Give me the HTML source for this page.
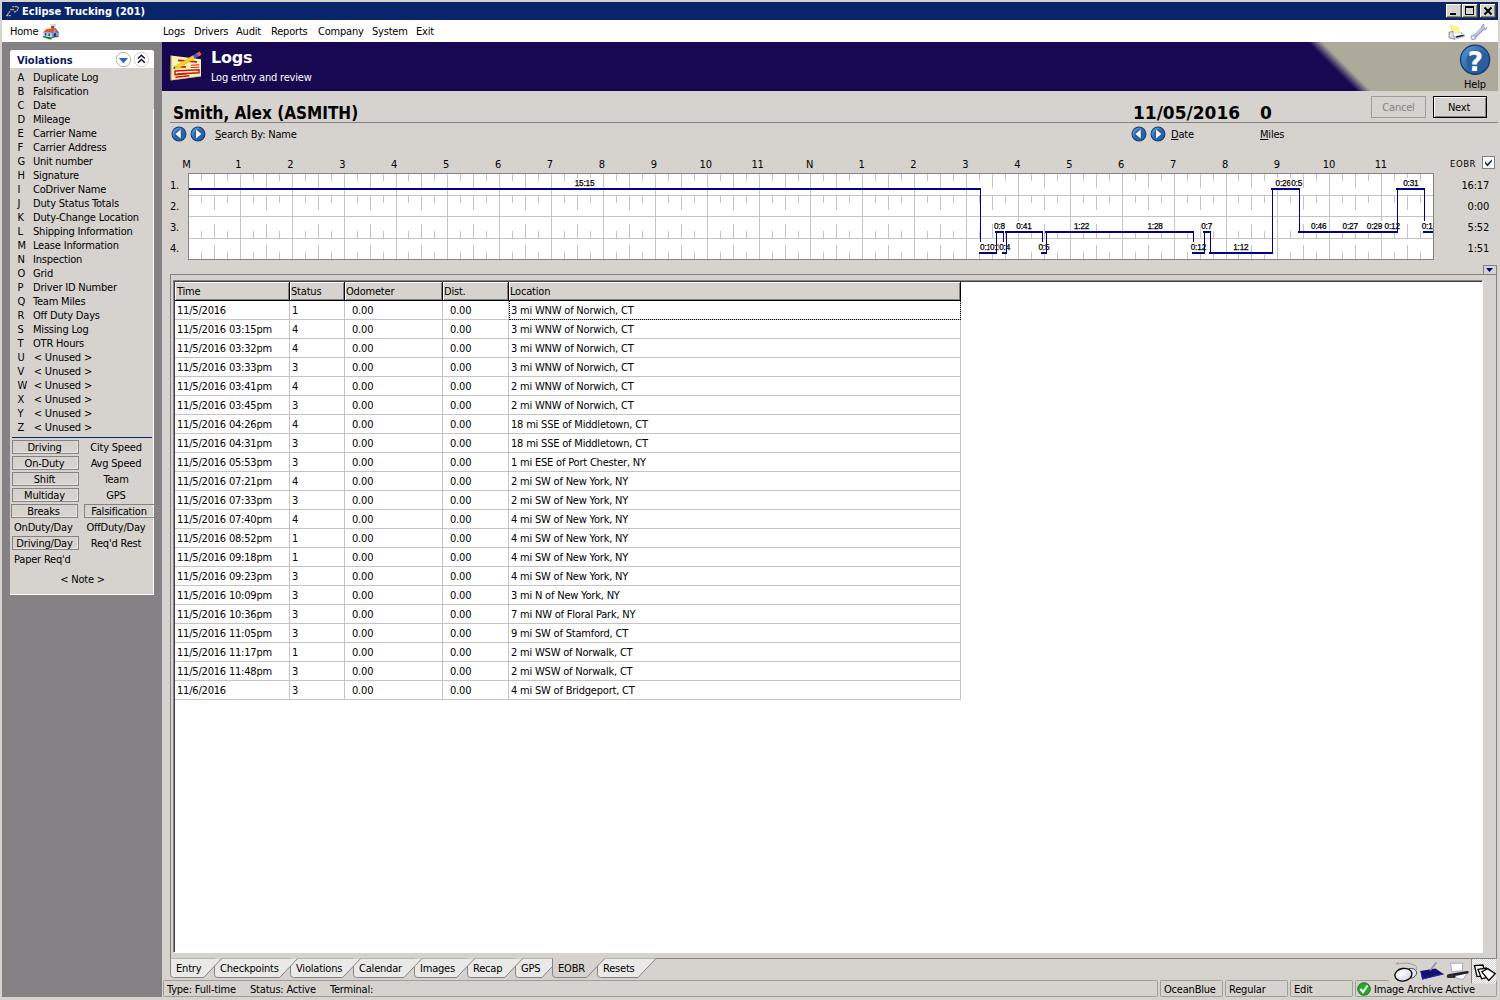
<!DOCTYPE html>
<html><head><meta charset="utf-8"><title>Eclipse Trucking (201)</title>
<style>
html,body{margin:0;padding:0}
body{width:1500px;height:1000px;overflow:hidden;background:#d6d3ce;position:relative;
 font-family:"DejaVu Sans Condensed","Liberation Sans",sans-serif;font-size:11px;line-height:13px;color:#000;letter-spacing:-0.2px}
div,span{position:absolute;box-sizing:border-box;white-space:nowrap}
.t{height:13px}
.b{font-weight:bold}
.c{text-align:center}
.r{text-align:right}
u{text-decoration:underline}

svg.ch text{font-family:"Liberation Sans",sans-serif;font-size:8.2px;letter-spacing:-0.15px;stroke:#000;stroke-width:0.25px}
</style></head>
<body>
<div class="" style="left:0px;top:0px;width:1500px;height:1000px;background:#d6d3ce"></div>
<div class="" style="left:2px;top:2px;width:1496px;height:18px;background:#08246b"></div>
<svg style="position:absolute;left:4px;top:4px" width="17" height="14" viewBox="4 4 17 14"><path d="M6 15.6 H10.8 M7.2 15 L10 11.4 M12.2 6.6 H17.6 L18.4 8 L17 10.8 L13.6 12.4" stroke="#b4b0ac" stroke-width="1.3" fill="none" stroke-dasharray="2.2 0.6"/><path d="M10 9.6 H14.2" stroke="#f0a020" stroke-width="1.3"/></svg>
<div class="t b" style="left:22px;top:5px;color:#fff;letter-spacing:0">Eclipse Trucking (201)</div>
<div class="" style="left:1446px;top:4px;width:16px;height:14px;background:#d6d3ce;box-shadow:inset -1px -1px 0 #424142, inset 1px 1px 0 #fff, inset -2px -2px 0 #848284"><div style="left:4px;top:9px;width:6px;height:2px;background:#000"></div></div>
<div class="" style="left:1462px;top:4px;width:16px;height:14px;background:#d6d3ce;box-shadow:inset -1px -1px 0 #424142, inset 1px 1px 0 #fff, inset -2px -2px 0 #848284"><div style="left:3px;top:2px;width:9px;height:9px;border:1px solid #000;border-top-width:2px"></div></div>
<div class="" style="left:1480px;top:4px;width:16px;height:14px;background:#d6d3ce;box-shadow:inset -1px -1px 0 #424142, inset 1px 1px 0 #fff, inset -2px -2px 0 #848284"><svg style="position:absolute;left:0;top:0" width="16" height="14"><path d="M4.5 3.5 L11.5 10.5 M11.5 3.5 L4.5 10.5" stroke="#000" stroke-width="2"/></svg></div>
<div class="" style="left:2px;top:20px;width:1496px;height:22px;background:#fff"></div>
<div class="t " style="left:10px;top:25px;">Home</div>
<div class="t " style="left:163px;top:25px;">Logs</div>
<div class="t " style="left:194px;top:25px;">Drivers</div>
<div class="t " style="left:236px;top:25px;">Audit</div>
<div class="t " style="left:271px;top:25px;">Reports</div>
<div class="t " style="left:318px;top:25px;">Company</div>
<div class="t " style="left:372px;top:25px;">System</div>
<div class="t " style="left:416px;top:25px;">Exit</div>
<svg style="position:absolute;left:40px;top:22px" width="22" height="20" viewBox="40 22 22 20">
<path d="M43 35.6 L51.6 37.3 L51.6 39.4 L50 39.6 L43 37.2 Z" fill="#128a12"/>
<path d="M43.2 32 L51.8 32.4 L51.8 37.6 L43.2 36 Z" fill="#b4d0fa"/>
<path d="M51.8 32.5 L55.2 29.4 L58.6 32.5 L58.6 36.4 L51.8 37.9 Z" fill="#6e9eda"/>
<rect x="44.9" y="33.1" width="1.5" height="2.3" fill="#1040b0"/>
<rect x="48.5" y="33.5" width="1.5" height="2.4" fill="#1040b0"/>
<path d="M53.8 33.3 L55.9 33.1 L55.9 37 L53.8 37.5 Z" fill="#0838a0"/>
<path d="M51.7 37 L53.6 36.7 L53.6 38 L51.7 38.4 Z M56.2 36.1 L58.4 35.6 L58.4 37 L56.2 37.5Z" fill="#c03810"/>
<rect x="50.9" y="24.1" width="4.8" height="2" fill="#e4e4e4" stroke="#b0b0b0" stroke-width="0.4"/>
<rect x="51.2" y="26" width="3" height="3.2" fill="#b83410"/>
<path d="M43 32.2 L46.4 29 L55.4 28.1 L52 32.8 Z" fill="#e2562c"/>
<path d="M55.4 28 L59 32.6 L58.3 33.3 L54.9 29.2 Z" fill="#a83a18"/>
<path d="M55 28.6 L51.6 32.9" stroke="#c8481e" stroke-width="0.8"/>
</svg>
<svg style="position:absolute;left:1446px;top:22px" width="22" height="20" viewBox="1446 22 22 20">
<path d="M1450.2 25 L1458 26 L1460.2 32.6 L1453.2 33 Z" fill="#fcf78c"/>
<path d="M1450.4 25 L1453.4 33" stroke="#e4dc58" stroke-width="0.8"/>
<path d="M1449 32.2 L1452.8 31.4 L1454.6 39.3 L1449 37.7 Z" fill="#dcdcec" stroke="#707078" stroke-width="0.7"/>
<path d="M1453 32.8 L1462 32.6 L1464.6 35 L1454.6 36.8 Z" fill="#ffffff" stroke="#c8c8d4" stroke-width="0.5"/>
<path d="M1454.6 36.8 L1464.6 35 L1464.6 36.6 L1454.8 39.2 Z" fill="#e4e4ec" stroke="#90909a" stroke-width="0.5"/>
<path d="M1456.2 37 L1463.6 35.3" stroke="#101010" stroke-width="1.3"/>
<rect x="1461" y="32.8" width="1.4" height="1.3" fill="#3cc43c"/>
</svg>
<svg style="position:absolute;left:1468px;top:22px" width="22" height="20" viewBox="1468 22 22 20">
<path d="M1474.6 36.6 L1483 28.2" stroke="#8c8ce0" stroke-width="3.6" stroke-linecap="round"/>
<path d="M1474.4 36 L1482.8 27.6" stroke="#c8c8d0" stroke-width="2.6" stroke-linecap="round"/>
<circle cx="1473.4" cy="37.4" r="2.4" fill="#d0d0dc" stroke="#8484dc" stroke-width="0.8"/>
<circle cx="1473.2" cy="37.6" r="1.1" fill="#fff"/>
<path d="M1481.4 27.6 Q1481 24.6 1484.2 24.2 L1483.6 27 L1485.2 28.4 L1487 27.2 Q1487.2 30 1483.8 30.2 Z" fill="#c4c4d0" stroke="#9090e0" stroke-width="0.6"/>
</svg>
<div class="" style="left:2px;top:42px;width:160px;height:955px;background:#848284"></div>
<div class="" style="left:10px;top:50px;width:144px;height:545px;background:#d6d3ce;border-radius:3px 3px 0 0;box-shadow:inset 0 -1px 0 #fff"></div>
<div class="" style="left:153px;top:109px;width:1px;height:486px;background:#fff"></div>
<div class="" style="left:10px;top:50px;width:144px;height:18px;background:#fff;border-radius:3px 3px 0 0"></div>
<div class="t b" style="left:17px;top:54px;color:#0a1a5a;letter-spacing:0">Violations</div>
<svg style="position:absolute;left:114px;top:50px" width="38" height="19" viewBox="114 50 38 19">
<circle cx="123.4" cy="59.5" r="7.2" fill="#fff" stroke="#b8b4a2" stroke-width="1"/>
<path d="M118.8 57.9 L128.1 57.9 L123.45 63.3 Z" fill="#2c64cc"/>
<circle cx="141.4" cy="59.5" r="7.2" fill="#fff" stroke="#d8d0c4" stroke-width="1"/>
<path d="M138 58.6 L141.4 55.3 L144.8 58.6 M138 62.7 L141.4 59.4 L144.8 62.7" stroke="#08083c" stroke-width="1.4" fill="none"/>
</svg>
<div class="t " style="left:17.4px;top:71px;">A</div>
<div class="t " style="left:33px;top:71px;">Duplicate Log</div>
<div class="t " style="left:17.4px;top:85px;">B</div>
<div class="t " style="left:33px;top:85px;">Falsification</div>
<div class="t " style="left:17.4px;top:99px;">C</div>
<div class="t " style="left:33px;top:99px;">Date</div>
<div class="t " style="left:17.4px;top:113px;">D</div>
<div class="t " style="left:33px;top:113px;">Mileage</div>
<div class="t " style="left:17.4px;top:127px;">E</div>
<div class="t " style="left:33px;top:127px;">Carrier Name</div>
<div class="t " style="left:17.4px;top:141px;">F</div>
<div class="t " style="left:33px;top:141px;">Carrier Address</div>
<div class="t " style="left:17.4px;top:155px;">G</div>
<div class="t " style="left:33px;top:155px;">Unit number</div>
<div class="t " style="left:17.4px;top:169px;">H</div>
<div class="t " style="left:33px;top:169px;">Signature</div>
<div class="t " style="left:17.4px;top:183px;">I</div>
<div class="t " style="left:33px;top:183px;">CoDriver Name</div>
<div class="t " style="left:17.4px;top:197px;">J</div>
<div class="t " style="left:33px;top:197px;">Duty Status Totals</div>
<div class="t " style="left:17.4px;top:211px;">K</div>
<div class="t " style="left:33px;top:211px;">Duty-Change Location</div>
<div class="t " style="left:17.4px;top:225px;">L</div>
<div class="t " style="left:33px;top:225px;">Shipping Information</div>
<div class="t " style="left:17.4px;top:239px;">M</div>
<div class="t " style="left:33px;top:239px;">Lease Information</div>
<div class="t " style="left:17.4px;top:253px;">N</div>
<div class="t " style="left:33px;top:253px;">Inspection</div>
<div class="t " style="left:17.4px;top:267px;">O</div>
<div class="t " style="left:33px;top:267px;">Grid</div>
<div class="t " style="left:17.4px;top:281px;">P</div>
<div class="t " style="left:33px;top:281px;">Driver ID Number</div>
<div class="t " style="left:17.4px;top:295px;">Q</div>
<div class="t " style="left:33px;top:295px;">Team Miles</div>
<div class="t " style="left:17.4px;top:309px;">R</div>
<div class="t " style="left:33px;top:309px;">Off Duty Days</div>
<div class="t " style="left:17.4px;top:323px;">S</div>
<div class="t " style="left:33px;top:323px;">Missing Log</div>
<div class="t " style="left:17.4px;top:337px;">T</div>
<div class="t " style="left:33px;top:337px;">OTR Hours</div>
<div class="t " style="left:17.4px;top:351px;">U</div>
<div class="t " style="left:33.8px;top:351px;">&lt; Unused &gt;</div>
<div class="t " style="left:17.4px;top:365px;">V</div>
<div class="t " style="left:33.8px;top:365px;">&lt; Unused &gt;</div>
<div class="t " style="left:17.4px;top:379px;">W</div>
<div class="t " style="left:33.8px;top:379px;">&lt; Unused &gt;</div>
<div class="t " style="left:17.4px;top:393px;">X</div>
<div class="t " style="left:33.8px;top:393px;">&lt; Unused &gt;</div>
<div class="t " style="left:17.4px;top:407px;">Y</div>
<div class="t " style="left:33.8px;top:407px;">&lt; Unused &gt;</div>
<div class="t " style="left:17.4px;top:421px;">Z</div>
<div class="t " style="left:33.8px;top:421px;">&lt; Unused &gt;</div>
<div class="" style="left:12px;top:437px;width:140px;height:1px;background:#08246b"></div>
<div class="" style="left:12px;top:440px;width:67px;height:14px;border:1px solid #848284;box-shadow:inset -1px -1px 0 #e8e6e0"></div>
<div class="t c " style="left:11px;top:441px;width:67px;">Driving</div>
<div class="" style="left:12px;top:456px;width:67px;height:14px;border:1px solid #848284;box-shadow:inset -1px -1px 0 #e8e6e0"></div>
<div class="t c " style="left:11px;top:457px;width:67px;">On-Duty</div>
<div class="" style="left:12px;top:472px;width:67px;height:14px;border:1px solid #848284;box-shadow:inset -1px -1px 0 #e8e6e0"></div>
<div class="t c " style="left:11px;top:473px;width:67px;">Shift</div>
<div class="" style="left:12px;top:488px;width:67px;height:14px;border:1px solid #848284;box-shadow:inset -1px -1px 0 #e8e6e0"></div>
<div class="t c " style="left:11px;top:489px;width:67px;">Multiday</div>
<div class="" style="left:11px;top:504px;width:67px;height:14px;border:1px solid #848284;box-shadow:inset -1px -1px 0 #e8e6e0"></div>
<div class="t c " style="left:10px;top:505px;width:67px;">Breaks</div>
<div class="t " style="left:14px;top:521px;">OnDuty/Day</div>
<div class="" style="left:12px;top:536px;width:67px;height:14px;border:1px solid #848284;box-shadow:inset -1px -1px 0 #e8e6e0"></div>
<div class="t c " style="left:11px;top:537px;width:67px;">Driving/Day</div>
<div class="t " style="left:14px;top:553px;">Paper Req'd</div>
<div class="t c " style="left:81px;top:441px;width:70px;">City Speed</div>
<div class="t c " style="left:81px;top:457px;width:70px;">Avg Speed</div>
<div class="t c " style="left:81px;top:473px;width:70px;">Team</div>
<div class="t c " style="left:81px;top:489px;width:70px;">GPS</div>
<div class="" style="left:84px;top:504px;width:70px;height:14px;border:1px solid #848284;border-right:none;box-shadow:inset 0 -1px 0 #e8e6e0"></div>
<div class="t c " style="left:84px;top:505px;width:70px;">Falsification</div>
<div class="t c " style="left:81px;top:521px;width:70px;">OffDuty/Day</div>
<div class="t c " style="left:81px;top:537px;width:70px;">Req'd Rest</div>
<div class="t c " style="left:10px;top:573px;width:145px;">&lt; Note &gt;</div>
<div class="hdr" style="left:162px;top:42px;width:1336px;height:49px;background:#180852"></div>
<div class="" style="left:1290px;top:42px;width:208px;height:49px;background:#adaa9c"></div>
<div class="" style="left:1290px;top:42px;width:110px;height:49px;background:linear-gradient(45deg,#180852 0,#180852 47.5px,#adaa9c 57.5px,#adaa9c 100%)"></div>
<div class="t b" style="left:211px;top:48px;color:#fff;font-size:16px;line-height:20px;height:20px;letter-spacing:-0.2px;font-family:'DejaVu Sans','Liberation Sans',sans-serif">Logs</div>
<div class="t " style="left:211px;top:71px;color:#fff">Log entry and review</div>
<svg style="position:absolute;left:168px;top:46px" width="36" height="38" viewBox="168 46 36 38">
<path d="M170.7 55.5 L201 59.3 L201 76.3 L170.7 80.3 Z" fill="#fbf2b6"/>
<path d="M171 55.5 V80.3" stroke="#a08840" stroke-width="1"/>
<path d="M171 80 L201 76" stroke="#d8cc90" stroke-width="0.8"/>
<path d="M178 60.4 L197 61.9" stroke="#cc1414" stroke-width="1.9" fill="none"/>
<path d="M174.5 66.8 L186 66.9" stroke="#cc1414" stroke-width="1.8" fill="none"/>
<path d="M191 65.2 L199.3 64.9 M191 67.5 L199.3 67.2" stroke="#d03020" stroke-width="1.1" fill="none"/>
<path d="M189.5 73.6 L175 74.6 V71 L199 69.8 V72.8 L177 74" stroke="#cc1414" stroke-width="1.5" fill="none"/>
<path d="M175.3 77.2 L189.3 75.8" stroke="#cc1414" stroke-width="1.6" fill="none"/>
<path d="M175.5 65.8 L193 55.2 L195 58.6 L177.5 69.2 Z" fill="#f2c80c"/>
<path d="M176.5 67.5 L194 57" stroke="#fae060" stroke-width="1"/>
<path d="M193 55.2 L196.4 53.2 L198.4 56.6 L195 58.6 Z" fill="#3c62d4"/>
<path d="M196.4 53.2 L199.6 51.4 L201.6 54.8 L198.4 56.6 Z" fill="#e06a50"/>
<path d="M175.5 65.8 L177.5 69.2 L173 68.5 Z" fill="#e4c48c"/>
<path d="M173 68.5 L174.6 66.8 L175.3 68.4 Z" fill="#101010"/>
</svg>
<svg style="position:absolute;left:1458px;top:43px" width="34" height="34" viewBox="1458 43 34 34">
<defs><linearGradient id="hg" x1="0" y1="0" x2="1" y2="1"><stop offset="0" stop-color="#5a98d4"/><stop offset="0.5" stop-color="#2e6cb0"/><stop offset="1" stop-color="#1c4c8c"/></linearGradient></defs>
<circle cx="1475.1" cy="59.7" r="15.2" fill="#123a72"/>
<circle cx="1475.1" cy="59.7" r="13.9" fill="url(#hg)"/>
<circle cx="1477.2" cy="61" r="10.8" fill="#2a5ea0"/>
<text x="1475.4" y="70.8" text-anchor="middle" style="font-family:'DejaVu Sans','Liberation Sans',sans-serif;font-weight:bold;font-size:27px;letter-spacing:0" fill="#fff">?</text>
</svg>
<div class="t c " style="left:1455px;top:78px;width:40px;">Help</div>
<div class="t b" style="left:173px;top:102px;font-size:17px;line-height:22px;height:22px;letter-spacing:0">Smith, Alex (ASMITH)</div>
<div class="t b" style="left:1133px;top:102px;font-size:17px;line-height:22px;height:22px;letter-spacing:0;font-family:'DejaVu Sans','Liberation Sans',sans-serif">11/05/2016</div>
<div class="t b" style="left:1260px;top:102px;font-size:17px;line-height:22px;height:22px;letter-spacing:0;font-family:'DejaVu Sans','Liberation Sans',sans-serif">0</div>
<div class="" style="left:170px;top:122px;width:1328px;height:1px;background:#848284"></div>
<svg style="position:absolute;left:170px;top:124.80000000000001px" width="18" height="18" viewBox="170 124.80000000000001 18 18">
<defs><linearGradient id="ng179" x1="0" y1="0" x2="1" y2="1"><stop offset="0" stop-color="#6aa4e0"/><stop offset="0.5" stop-color="#2e6cb2"/><stop offset="1" stop-color="#1e5090"/></linearGradient></defs>
<circle cx="179" cy="133.8" r="7.5" fill="#163e6e"/><circle cx="179" cy="133.8" r="6.5" fill="url(#ng179)"/><circle cx="179.8" cy="134.4" r="5" fill="#2a62a6"/><path d="M175.5 133.8 L180.7 129.3 L180.7 138.3 Z" fill="#fff"/></svg>
<svg style="position:absolute;left:189px;top:124.80000000000001px" width="18" height="18" viewBox="189 124.80000000000001 18 18">
<defs><linearGradient id="ng198" x1="0" y1="0" x2="1" y2="1"><stop offset="0" stop-color="#6aa4e0"/><stop offset="0.5" stop-color="#2e6cb2"/><stop offset="1" stop-color="#1e5090"/></linearGradient></defs>
<circle cx="198" cy="133.8" r="7.5" fill="#163e6e"/><circle cx="198" cy="133.8" r="6.5" fill="url(#ng198)"/><circle cx="198.8" cy="134.4" r="5" fill="#2a62a6"/><path d="M201.3 133.8 L196.1 129.3 L196.1 138.3 Z" fill="#fff"/></svg>
<svg style="position:absolute;left:1130px;top:124.80000000000001px" width="18" height="18" viewBox="1130 124.80000000000001 18 18">
<defs><linearGradient id="ng1139" x1="0" y1="0" x2="1" y2="1"><stop offset="0" stop-color="#6aa4e0"/><stop offset="0.5" stop-color="#2e6cb2"/><stop offset="1" stop-color="#1e5090"/></linearGradient></defs>
<circle cx="1139" cy="133.8" r="7.5" fill="#163e6e"/><circle cx="1139" cy="133.8" r="6.5" fill="url(#ng1139)"/><circle cx="1139.8" cy="134.4" r="5" fill="#2a62a6"/><path d="M1135.5 133.8 L1140.7 129.3 L1140.7 138.3 Z" fill="#fff"/></svg>
<svg style="position:absolute;left:1149px;top:124.80000000000001px" width="18" height="18" viewBox="1149 124.80000000000001 18 18">
<defs><linearGradient id="ng1158" x1="0" y1="0" x2="1" y2="1"><stop offset="0" stop-color="#6aa4e0"/><stop offset="0.5" stop-color="#2e6cb2"/><stop offset="1" stop-color="#1e5090"/></linearGradient></defs>
<circle cx="1158" cy="133.8" r="7.5" fill="#163e6e"/><circle cx="1158" cy="133.8" r="6.5" fill="url(#ng1158)"/><circle cx="1158.8" cy="134.4" r="5" fill="#2a62a6"/><path d="M1161.3 133.8 L1156.1 129.3 L1156.1 138.3 Z" fill="#fff"/></svg>
<div class="t " style="left:215px;top:128px;"><u>S</u>earch By: Name</div>
<div class="t " style="left:1171px;top:128px;"><u>D</u>ate</div>
<div class="t " style="left:1260px;top:128px;"><u>M</u>iles</div>
<div class="" style="left:1371px;top:96px;width:55px;height:22px;border:1px solid #a09c94"></div>
<div class="t c " style="left:1371px;top:101px;width:55px;color:#848284">Cancel</div>
<div class="" style="left:1433px;top:96px;width:54px;height:22px;border:1px solid #000;box-shadow:inset 1px 1px 0 #fff, inset -1px -1px 0 #848284"></div>
<div class="t c " style="left:1432px;top:101px;width:54px;">Next</div>
<div class="t c " style="left:175.4px;top:158px;width:22px;">M</div>
<div class="t c " style="left:227.3px;top:158px;width:22px;">1</div>
<div class="t c " style="left:279.3px;top:158px;width:22px;">2</div>
<div class="t c " style="left:331.2px;top:158px;width:22px;">3</div>
<div class="t c " style="left:383.1px;top:158px;width:22px;">4</div>
<div class="t c " style="left:435.1px;top:158px;width:22px;">5</div>
<div class="t c " style="left:487.0px;top:158px;width:22px;">6</div>
<div class="t c " style="left:538.9px;top:158px;width:22px;">7</div>
<div class="t c " style="left:590.8px;top:158px;width:22px;">8</div>
<div class="t c " style="left:642.8px;top:158px;width:22px;">9</div>
<div class="t c " style="left:694.7px;top:158px;width:22px;">10</div>
<div class="t c " style="left:746.6px;top:158px;width:22px;">11</div>
<div class="t c " style="left:798.6px;top:158px;width:22px;">N</div>
<div class="t c " style="left:850.5px;top:158px;width:22px;">1</div>
<div class="t c " style="left:902.4px;top:158px;width:22px;">2</div>
<div class="t c " style="left:954.4px;top:158px;width:22px;">3</div>
<div class="t c " style="left:1006.3px;top:158px;width:22px;">4</div>
<div class="t c " style="left:1058.2px;top:158px;width:22px;">5</div>
<div class="t c " style="left:1110.1px;top:158px;width:22px;">6</div>
<div class="t c " style="left:1162.1px;top:158px;width:22px;">7</div>
<div class="t c " style="left:1214.0px;top:158px;width:22px;">8</div>
<div class="t c " style="left:1265.9px;top:158px;width:22px;">9</div>
<div class="t c " style="left:1317.9px;top:158px;width:22px;">10</div>
<div class="t c " style="left:1369.8px;top:158px;width:22px;">11</div>
<div class="t " style="left:170px;top:179px;">1.</div>
<div class="t " style="left:170px;top:200px;">2.</div>
<div class="t " style="left:170px;top:221px;">3.</div>
<div class="t " style="left:170px;top:242px;">4.</div>
<svg class="ch" style="position:absolute;left:188px;top:173px" width="1246" height="87" viewBox="0 0 1246 87"><rect x="0" y="0" width="1246" height="87" fill="#fff"/><path d="M13.5 0V8 M13.5 22V30 M13.5 58V65 M13.5 79V86 M26.5 0V15 M26.5 22V37 M26.5 51V65 M26.5 72V86 M39.5 0V8 M39.5 22V30 M39.5 58V65 M39.5 79V86 M52.5 0V86 M65.5 0V8 M65.5 22V30 M65.5 58V65 M65.5 79V86 M78.5 0V15 M78.5 22V37 M78.5 51V65 M78.5 72V86 M91.5 0V8 M91.5 22V30 M91.5 58V65 M91.5 79V86 M104.5 0V86 M117.5 0V8 M117.5 22V30 M117.5 58V65 M117.5 79V86 M130.5 0V15 M130.5 22V37 M130.5 51V65 M130.5 72V86 M143.5 0V8 M143.5 22V30 M143.5 58V65 M143.5 79V86 M156.5 0V86 M169.5 0V8 M169.5 22V30 M169.5 58V65 M169.5 79V86 M182.5 0V15 M182.5 22V37 M182.5 51V65 M182.5 72V86 M195.5 0V8 M195.5 22V30 M195.5 58V65 M195.5 79V86 M208.5 0V86 M220.5 0V8 M220.5 22V30 M220.5 58V65 M220.5 79V86 M233.5 0V15 M233.5 22V37 M233.5 51V65 M233.5 72V86 M246.5 0V8 M246.5 22V30 M246.5 58V65 M246.5 79V86 M259.5 0V86 M272.5 0V8 M272.5 22V30 M272.5 58V65 M272.5 79V86 M285.5 0V15 M285.5 22V37 M285.5 51V65 M285.5 72V86 M298.5 0V8 M298.5 22V30 M298.5 58V65 M298.5 79V86 M311.5 0V86 M324.5 0V8 M324.5 22V30 M324.5 58V65 M324.5 79V86 M337.5 0V15 M337.5 22V37 M337.5 51V65 M337.5 72V86 M350.5 0V8 M350.5 22V30 M350.5 58V65 M350.5 79V86 M363.5 0V86 M376.5 0V8 M376.5 22V30 M376.5 58V65 M376.5 79V86 M389.5 0V15 M389.5 22V37 M389.5 51V65 M389.5 72V86 M402.5 0V8 M402.5 22V30 M402.5 58V65 M402.5 79V86 M415.5 0V86 M428.5 0V8 M428.5 22V30 M428.5 58V65 M428.5 79V86 M441.5 0V15 M441.5 22V37 M441.5 51V65 M441.5 72V86 M454.5 0V8 M454.5 22V30 M454.5 58V65 M454.5 79V86 M467.5 0V86 M480.5 0V8 M480.5 22V30 M480.5 58V65 M480.5 79V86 M493.5 0V15 M493.5 22V37 M493.5 51V65 M493.5 72V86 M506.5 0V8 M506.5 22V30 M506.5 58V65 M506.5 79V86 M519.5 0V86 M532.5 0V8 M532.5 22V30 M532.5 58V65 M532.5 79V86 M545.5 0V15 M545.5 22V37 M545.5 51V65 M545.5 72V86 M558.5 0V8 M558.5 22V30 M558.5 58V65 M558.5 79V86 M571.5 0V86 M584.5 0V8 M584.5 22V30 M584.5 58V65 M584.5 79V86 M597.5 0V15 M597.5 22V37 M597.5 51V65 M597.5 72V86 M610.5 0V8 M610.5 22V30 M610.5 58V65 M610.5 79V86 M622.5 0V86 M635.5 0V8 M635.5 22V30 M635.5 58V65 M635.5 79V86 M648.5 0V15 M648.5 22V37 M648.5 51V65 M648.5 72V86 M661.5 0V8 M661.5 22V30 M661.5 58V65 M661.5 79V86 M674.5 0V86 M687.5 0V8 M687.5 22V30 M687.5 58V65 M687.5 79V86 M700.5 0V15 M700.5 22V37 M700.5 51V65 M700.5 72V86 M713.5 0V8 M713.5 22V30 M713.5 58V65 M713.5 79V86 M726.5 0V86 M739.5 0V8 M739.5 22V30 M739.5 58V65 M739.5 79V86 M752.5 0V15 M752.5 22V37 M752.5 51V65 M752.5 72V86 M765.5 0V8 M765.5 22V30 M765.5 58V65 M765.5 79V86 M778.5 0V86 M791.5 0V8 M791.5 22V30 M791.5 58V65 M791.5 79V86 M804.5 0V15 M804.5 22V37 M804.5 51V65 M804.5 72V86 M817.5 0V8 M817.5 22V30 M817.5 58V65 M817.5 79V86 M830.5 0V86 M843.5 0V8 M843.5 22V30 M843.5 58V65 M843.5 79V86 M856.5 0V15 M856.5 22V37 M856.5 51V65 M856.5 72V86 M869.5 0V8 M869.5 22V30 M869.5 58V65 M869.5 79V86 M882.5 0V86 M895.5 0V8 M895.5 22V30 M895.5 58V65 M895.5 79V86 M908.5 0V15 M908.5 22V37 M908.5 51V65 M908.5 72V86 M921.5 0V8 M921.5 22V30 M921.5 58V65 M921.5 79V86 M934.5 0V86 M947.5 0V8 M947.5 22V30 M947.5 58V65 M947.5 79V86 M960.5 0V15 M960.5 22V37 M960.5 51V65 M960.5 72V86 M973.5 0V8 M973.5 22V30 M973.5 58V65 M973.5 79V86 M986.5 0V86 M999.5 0V8 M999.5 22V30 M999.5 58V65 M999.5 79V86 M1012.5 0V15 M1012.5 22V37 M1012.5 51V65 M1012.5 72V86 M1025.5 0V8 M1025.5 22V30 M1025.5 58V65 M1025.5 79V86 M1038.5 0V86 M1050.5 0V8 M1050.5 22V30 M1050.5 58V65 M1050.5 79V86 M1063.5 0V15 M1063.5 22V37 M1063.5 51V65 M1063.5 72V86 M1076.5 0V8 M1076.5 22V30 M1076.5 58V65 M1076.5 79V86 M1089.5 0V86 M1102.5 0V8 M1102.5 22V30 M1102.5 58V65 M1102.5 79V86 M1115.5 0V15 M1115.5 22V37 M1115.5 51V65 M1115.5 72V86 M1128.5 0V8 M1128.5 22V30 M1128.5 58V65 M1128.5 79V86 M1141.5 0V86 M1154.5 0V8 M1154.5 22V30 M1154.5 58V65 M1154.5 79V86 M1167.5 0V15 M1167.5 22V37 M1167.5 51V65 M1167.5 72V86 M1180.5 0V8 M1180.5 22V30 M1180.5 58V65 M1180.5 79V86 M1193.5 0V86 M1206.5 0V8 M1206.5 22V30 M1206.5 58V65 M1206.5 79V86 M1219.5 0V15 M1219.5 22V37 M1219.5 51V65 M1219.5 72V86 M1232.5 0V8 M1232.5 22V30 M1232.5 58V65 M1232.5 79V86 M0 22.5H1245 M0 43.5H1245 M0 65.5H1245" stroke="#c6c3c6" stroke-width="1" fill="none" shape-rendering="crispEdges"/><rect x="0" y="15" width="793" height="2" fill="#000084"/><rect x="385.9" y="5" width="21.1" height="10" fill="#fff"/><text x="396.5" y="13" text-anchor="middle">15:15</text><rect x="792" y="15" width="1" height="65" fill="#000084"/><rect x="791" y="79" width="17" height="2" fill="#000084"/><rect x="791.4" y="69" width="16.6" height="10" fill="#fff"/><text x="799.7" y="77" text-anchor="middle">0:17</text><rect x="806" y="79" width="3" height="2" fill="#000084"/><rect x="801.4" y="69" width="12.2" height="10" fill="#fff"/><text x="807.5" y="77" text-anchor="middle">0:1</text><rect x="808" y="58" width="1" height="22" fill="#000084"/><rect x="807" y="58" width="9" height="2" fill="#000084"/><rect x="805.3" y="48" width="12.2" height="10" fill="#fff"/><text x="811.4" y="56" text-anchor="middle">0:8</text><rect x="815" y="58" width="1" height="22" fill="#000084"/><rect x="814" y="79" width="5" height="2" fill="#000084"/><rect x="810.5" y="69" width="12.2" height="10" fill="#fff"/><text x="816.6" y="77" text-anchor="middle">0:4</text><rect x="818" y="58" width="1" height="22" fill="#000084"/><rect x="817" y="58" width="38" height="2" fill="#000084"/><rect x="827.7" y="48" width="16.6" height="10" fill="#fff"/><text x="836.0" y="56" text-anchor="middle">0:41</text><rect x="854" y="58" width="1" height="22" fill="#000084"/><rect x="853" y="79" width="6" height="2" fill="#000084"/><rect x="849.8" y="69" width="12.2" height="10" fill="#fff"/><text x="855.9" y="77" text-anchor="middle">0:5</text><rect x="858" y="58" width="1" height="22" fill="#000084"/><rect x="857" y="58" width="73" height="2" fill="#000084"/><rect x="885.2" y="48" width="16.6" height="10" fill="#fff"/><text x="893.6" y="56" text-anchor="middle">1:22</text><rect x="928" y="58" width="78" height="2" fill="#000084"/><rect x="958.8" y="48" width="16.6" height="10" fill="#fff"/><text x="967.1" y="56" text-anchor="middle">1:28</text><rect x="1005" y="58" width="1" height="22" fill="#000084"/><rect x="1004" y="79" width="13" height="2" fill="#000084"/><rect x="1002.1" y="69" width="16.6" height="10" fill="#fff"/><text x="1010.4" y="77" text-anchor="middle">0:12</text><rect x="1016" y="58" width="1" height="22" fill="#000084"/><rect x="1015" y="58" width="8" height="2" fill="#000084"/><rect x="1012.5" y="48" width="12.2" height="10" fill="#fff"/><text x="1018.6" y="56" text-anchor="middle">0:7</text><rect x="1022" y="58" width="1" height="22" fill="#000084"/><rect x="1021" y="79" width="64" height="2" fill="#000084"/><rect x="1044.5" y="69" width="16.6" height="10" fill="#fff"/><text x="1052.8" y="77" text-anchor="middle">1:12</text><rect x="1084" y="15" width="1" height="65" fill="#000084"/><rect x="1083" y="15" width="24" height="2" fill="#000084"/><rect x="1086.9" y="5" width="16.6" height="10" fill="#fff"/><text x="1095.2" y="13" text-anchor="middle">0:26</text><rect x="1105" y="15" width="7" height="2" fill="#000084"/><rect x="1102.5" y="5" width="12.2" height="10" fill="#fff"/><text x="1108.6" y="13" text-anchor="middle">0:5</text><rect x="1111" y="15" width="1" height="44" fill="#000084"/><rect x="1110" y="58" width="42" height="2" fill="#000084"/><rect x="1122.3" y="48" width="16.6" height="10" fill="#fff"/><text x="1130.7" y="56" text-anchor="middle">0:46</text><rect x="1150" y="58" width="25" height="2" fill="#000084"/><rect x="1153.9" y="48" width="16.6" height="10" fill="#fff"/><text x="1162.2" y="56" text-anchor="middle">0:27</text><rect x="1173" y="58" width="27" height="2" fill="#000084"/><rect x="1178.1" y="48" width="16.6" height="10" fill="#fff"/><text x="1186.5" y="56" text-anchor="middle">0:29</text><rect x="1198" y="58" width="12" height="2" fill="#000084"/><rect x="1195.9" y="48" width="16.6" height="10" fill="#fff"/><text x="1204.2" y="56" text-anchor="middle">0:12</text><rect x="1209" y="15" width="1" height="44" fill="#000084"/><rect x="1208" y="15" width="29" height="2" fill="#000084"/><rect x="1214.5" y="5" width="16.6" height="10" fill="#fff"/><text x="1222.8" y="13" text-anchor="middle">0:31</text><rect x="1236" y="15" width="1" height="44" fill="#000084"/><rect x="1235" y="58" width="11" height="2" fill="#000084"/><rect x="1233.1" y="48" width="16.6" height="10" fill="#fff"/><text x="1241.4" y="56" text-anchor="middle">0:12</text><path d="M0.5 86V0.5H1245" stroke="#848284" stroke-width="1" fill="none" shape-rendering="crispEdges"/><path d="M0 86.5H1246M1245.5 0V87" stroke="#848284" stroke-width="1" fill="none" shape-rendering="crispEdges"/></svg>
<div class="t r" style="left:1439px;top:179px;width:50px">16:17</div>
<div class="t r" style="left:1439px;top:200px;width:50px">0:00</div>
<div class="t r" style="left:1439px;top:221px;width:50px">5:52</div>
<div class="t r" style="left:1439px;top:242px;width:50px">1:51</div>
<div class="t " style="left:1450px;top:156px;font-size:9.5px;letter-spacing:0.5px;top:157px">EOBR</div>
<div class="" style="left:1482px;top:156px;width:13px;height:13px;background:#fff;border:1px solid #848284"></div>
<svg style="position:absolute;left:1484px;top:158px" width="10" height="9" viewBox="1484 158 10 9"><path d="M1485 161.2 L1487.4 164 L1491.8 159.2 L1491.8 161.6 L1487.4 166.4 L1485 163.6 Z" fill="#0a2464"/></svg>
<div class="" style="left:170px;top:274px;width:1327px;height:685px;border:1px solid #848284"></div>
<div class="" style="left:1483px;top:265px;width:14px;height:10px;background:#d6d3ce;border:1px solid #848284"></div>
<svg style="position:absolute;left:1486px;top:268px" width="8" height="5"><path d="M0 0 L7 0 L3.5 4 Z" fill="#000084"/></svg>
<div class="" style="left:173px;top:280px;width:1310px;height:673px;background:#fff;border-top:1px solid #848284;border-left:1px solid #848284;border-right:1px solid #fff;border-bottom:1px solid #fff;box-shadow:inset 1px 1px 0 #424142"></div>
<div class="" style="left:175px;top:282px;width:115px;height:19px;background:#d6d3ce;box-shadow:inset -1px -1px 0 #000, inset 1px 1px 0 #fff, inset -2px -2px 0 #848284"></div>
<div class="t " style="left:177px;top:285px;">Time</div>
<div class="" style="left:290px;top:282px;width:55px;height:19px;background:#d6d3ce;box-shadow:inset -1px -1px 0 #000, inset 1px 1px 0 #fff, inset -2px -2px 0 #848284"></div>
<div class="t " style="left:291px;top:285px;">Status</div>
<div class="" style="left:345px;top:282px;width:98px;height:19px;background:#d6d3ce;box-shadow:inset -1px -1px 0 #000, inset 1px 1px 0 #fff, inset -2px -2px 0 #848284"></div>
<div class="t " style="left:346px;top:285px;">Odometer</div>
<div class="" style="left:443px;top:282px;width:66px;height:19px;background:#d6d3ce;box-shadow:inset -1px -1px 0 #000, inset 1px 1px 0 #fff, inset -2px -2px 0 #848284"></div>
<div class="t " style="left:444px;top:285px;">Dist.</div>
<div class="" style="left:509px;top:282px;width:452px;height:19px;background:#d6d3ce;box-shadow:inset -1px -1px 0 #000, inset 1px 1px 0 #fff, inset -2px -2px 0 #848284"></div>
<div class="t " style="left:510px;top:285px;">Location</div>
<div class="" style="left:175px;top:319px;width:786px;height:1px;background:#c6c3c6"></div>
<div class="" style="left:175px;top:338px;width:786px;height:1px;background:#c6c3c6"></div>
<div class="" style="left:175px;top:357px;width:786px;height:1px;background:#c6c3c6"></div>
<div class="" style="left:175px;top:376px;width:786px;height:1px;background:#c6c3c6"></div>
<div class="" style="left:175px;top:395px;width:786px;height:1px;background:#c6c3c6"></div>
<div class="" style="left:175px;top:414px;width:786px;height:1px;background:#c6c3c6"></div>
<div class="" style="left:175px;top:433px;width:786px;height:1px;background:#c6c3c6"></div>
<div class="" style="left:175px;top:452px;width:786px;height:1px;background:#c6c3c6"></div>
<div class="" style="left:175px;top:471px;width:786px;height:1px;background:#c6c3c6"></div>
<div class="" style="left:175px;top:490px;width:786px;height:1px;background:#c6c3c6"></div>
<div class="" style="left:175px;top:509px;width:786px;height:1px;background:#c6c3c6"></div>
<div class="" style="left:175px;top:528px;width:786px;height:1px;background:#c6c3c6"></div>
<div class="" style="left:175px;top:547px;width:786px;height:1px;background:#c6c3c6"></div>
<div class="" style="left:175px;top:566px;width:786px;height:1px;background:#c6c3c6"></div>
<div class="" style="left:175px;top:585px;width:786px;height:1px;background:#c6c3c6"></div>
<div class="" style="left:175px;top:604px;width:786px;height:1px;background:#c6c3c6"></div>
<div class="" style="left:175px;top:623px;width:786px;height:1px;background:#c6c3c6"></div>
<div class="" style="left:175px;top:642px;width:786px;height:1px;background:#c6c3c6"></div>
<div class="" style="left:175px;top:661px;width:786px;height:1px;background:#c6c3c6"></div>
<div class="" style="left:175px;top:680px;width:786px;height:1px;background:#c6c3c6"></div>
<div class="" style="left:175px;top:699px;width:786px;height:1px;background:#c6c3c6"></div>
<div class="" style="left:289px;top:301px;width:1px;height:399px;background:#c6c3c6"></div>
<div class="" style="left:344px;top:301px;width:1px;height:399px;background:#c6c3c6"></div>
<div class="" style="left:442px;top:301px;width:1px;height:399px;background:#c6c3c6"></div>
<div class="" style="left:508px;top:301px;width:1px;height:399px;background:#c6c3c6"></div>
<div class="" style="left:960px;top:301px;width:1px;height:399px;background:#c6c3c6"></div>
<div class="t " style="left:177px;top:304px;">11/5/2016</div>
<div class="t " style="left:292px;top:304px;">1</div>
<div class="t " style="left:352px;top:304px;">0.00</div>
<div class="t " style="left:450px;top:304px;">0.00</div>
<div class="t " style="left:511px;top:304px;">3 mi WNW of Norwich, CT</div>
<div class="t " style="left:177px;top:323px;">11/5/2016 03:15pm</div>
<div class="t " style="left:292px;top:323px;">4</div>
<div class="t " style="left:352px;top:323px;">0.00</div>
<div class="t " style="left:450px;top:323px;">0.00</div>
<div class="t " style="left:511px;top:323px;">3 mi WNW of Norwich, CT</div>
<div class="t " style="left:177px;top:342px;">11/5/2016 03:32pm</div>
<div class="t " style="left:292px;top:342px;">4</div>
<div class="t " style="left:352px;top:342px;">0.00</div>
<div class="t " style="left:450px;top:342px;">0.00</div>
<div class="t " style="left:511px;top:342px;">3 mi WNW of Norwich, CT</div>
<div class="t " style="left:177px;top:361px;">11/5/2016 03:33pm</div>
<div class="t " style="left:292px;top:361px;">3</div>
<div class="t " style="left:352px;top:361px;">0.00</div>
<div class="t " style="left:450px;top:361px;">0.00</div>
<div class="t " style="left:511px;top:361px;">3 mi WNW of Norwich, CT</div>
<div class="t " style="left:177px;top:380px;">11/5/2016 03:41pm</div>
<div class="t " style="left:292px;top:380px;">4</div>
<div class="t " style="left:352px;top:380px;">0.00</div>
<div class="t " style="left:450px;top:380px;">0.00</div>
<div class="t " style="left:511px;top:380px;">2 mi WNW of Norwich, CT</div>
<div class="t " style="left:177px;top:399px;">11/5/2016 03:45pm</div>
<div class="t " style="left:292px;top:399px;">3</div>
<div class="t " style="left:352px;top:399px;">0.00</div>
<div class="t " style="left:450px;top:399px;">0.00</div>
<div class="t " style="left:511px;top:399px;">2 mi WNW of Norwich, CT</div>
<div class="t " style="left:177px;top:418px;">11/5/2016 04:26pm</div>
<div class="t " style="left:292px;top:418px;">4</div>
<div class="t " style="left:352px;top:418px;">0.00</div>
<div class="t " style="left:450px;top:418px;">0.00</div>
<div class="t " style="left:511px;top:418px;">18 mi SSE of Middletown, CT</div>
<div class="t " style="left:177px;top:437px;">11/5/2016 04:31pm</div>
<div class="t " style="left:292px;top:437px;">3</div>
<div class="t " style="left:352px;top:437px;">0.00</div>
<div class="t " style="left:450px;top:437px;">0.00</div>
<div class="t " style="left:511px;top:437px;">18 mi SSE of Middletown, CT</div>
<div class="t " style="left:177px;top:456px;">11/5/2016 05:53pm</div>
<div class="t " style="left:292px;top:456px;">3</div>
<div class="t " style="left:352px;top:456px;">0.00</div>
<div class="t " style="left:450px;top:456px;">0.00</div>
<div class="t " style="left:511px;top:456px;">1 mi ESE of Port Chester, NY</div>
<div class="t " style="left:177px;top:475px;">11/5/2016 07:21pm</div>
<div class="t " style="left:292px;top:475px;">4</div>
<div class="t " style="left:352px;top:475px;">0.00</div>
<div class="t " style="left:450px;top:475px;">0.00</div>
<div class="t " style="left:511px;top:475px;">2 mi SW of New York, NY</div>
<div class="t " style="left:177px;top:494px;">11/5/2016 07:33pm</div>
<div class="t " style="left:292px;top:494px;">3</div>
<div class="t " style="left:352px;top:494px;">0.00</div>
<div class="t " style="left:450px;top:494px;">0.00</div>
<div class="t " style="left:511px;top:494px;">2 mi SW of New York, NY</div>
<div class="t " style="left:177px;top:513px;">11/5/2016 07:40pm</div>
<div class="t " style="left:292px;top:513px;">4</div>
<div class="t " style="left:352px;top:513px;">0.00</div>
<div class="t " style="left:450px;top:513px;">0.00</div>
<div class="t " style="left:511px;top:513px;">4 mi SW of New York, NY</div>
<div class="t " style="left:177px;top:532px;">11/5/2016 08:52pm</div>
<div class="t " style="left:292px;top:532px;">1</div>
<div class="t " style="left:352px;top:532px;">0.00</div>
<div class="t " style="left:450px;top:532px;">0.00</div>
<div class="t " style="left:511px;top:532px;">4 mi SW of New York, NY</div>
<div class="t " style="left:177px;top:551px;">11/5/2016 09:18pm</div>
<div class="t " style="left:292px;top:551px;">1</div>
<div class="t " style="left:352px;top:551px;">0.00</div>
<div class="t " style="left:450px;top:551px;">0.00</div>
<div class="t " style="left:511px;top:551px;">4 mi SW of New York, NY</div>
<div class="t " style="left:177px;top:570px;">11/5/2016 09:23pm</div>
<div class="t " style="left:292px;top:570px;">3</div>
<div class="t " style="left:352px;top:570px;">0.00</div>
<div class="t " style="left:450px;top:570px;">0.00</div>
<div class="t " style="left:511px;top:570px;">4 mi SW of New York, NY</div>
<div class="t " style="left:177px;top:589px;">11/5/2016 10:09pm</div>
<div class="t " style="left:292px;top:589px;">3</div>
<div class="t " style="left:352px;top:589px;">0.00</div>
<div class="t " style="left:450px;top:589px;">0.00</div>
<div class="t " style="left:511px;top:589px;">3 mi N of New York, NY</div>
<div class="t " style="left:177px;top:608px;">11/5/2016 10:36pm</div>
<div class="t " style="left:292px;top:608px;">3</div>
<div class="t " style="left:352px;top:608px;">0.00</div>
<div class="t " style="left:450px;top:608px;">0.00</div>
<div class="t " style="left:511px;top:608px;">7 mi NW of Floral Park, NY</div>
<div class="t " style="left:177px;top:627px;">11/5/2016 11:05pm</div>
<div class="t " style="left:292px;top:627px;">3</div>
<div class="t " style="left:352px;top:627px;">0.00</div>
<div class="t " style="left:450px;top:627px;">0.00</div>
<div class="t " style="left:511px;top:627px;">9 mi SW of Stamford, CT</div>
<div class="t " style="left:177px;top:646px;">11/5/2016 11:17pm</div>
<div class="t " style="left:292px;top:646px;">1</div>
<div class="t " style="left:352px;top:646px;">0.00</div>
<div class="t " style="left:450px;top:646px;">0.00</div>
<div class="t " style="left:511px;top:646px;">2 mi WSW of Norwalk, CT</div>
<div class="t " style="left:177px;top:665px;">11/5/2016 11:48pm</div>
<div class="t " style="left:292px;top:665px;">3</div>
<div class="t " style="left:352px;top:665px;">0.00</div>
<div class="t " style="left:450px;top:665px;">0.00</div>
<div class="t " style="left:511px;top:665px;">2 mi WSW of Norwalk, CT</div>
<div class="t " style="left:177px;top:684px;">11/6/2016</div>
<div class="t " style="left:292px;top:684px;">3</div>
<div class="t " style="left:352px;top:684px;">0.00</div>
<div class="t " style="left:450px;top:684px;">0.00</div>
<div class="t " style="left:511px;top:684px;">4 mi SW of Bridgeport, CT</div>
<div class="" style="left:509px;top:300px;width:452px;height:20px;border:1px dotted #000"></div>
<svg style="position:absolute;left:160px;top:955px" width="520" height="26" viewBox="160 955 520 26"><path d="M597.5 958.5 V974.5 Q597.5 977.5 600.5 977.5 H638 L656 958.5" fill="#e9e9e7" stroke="#848284" stroke-width="1"/><path d="M515.5 958.5 V974.5 Q515.5 977.5 518.5 977.5 H542 L560 958.5" fill="#e9e9e7" stroke="#848284" stroke-width="1"/><path d="M467.5 958.5 V974.5 Q467.5 977.5 470.5 977.5 H504.7 L522.7 958.5" fill="#e9e9e7" stroke="#848284" stroke-width="1"/><path d="M414.5 958.5 V974.5 Q414.5 977.5 417.5 977.5 H456.7 L474.7 958.5" fill="#e9e9e7" stroke="#848284" stroke-width="1"/><path d="M353.5 958.5 V974.5 Q353.5 977.5 356.5 977.5 H404 L422 958.5" fill="#e9e9e7" stroke="#848284" stroke-width="1"/><path d="M290.5 958.5 V974.5 Q290.5 977.5 293.5 977.5 H342.7 L360.7 958.5" fill="#e9e9e7" stroke="#848284" stroke-width="1"/><path d="M214.5 958.5 V974.5 Q214.5 977.5 217.5 977.5 H279.7 L297.7 958.5" fill="#e9e9e7" stroke="#848284" stroke-width="1"/><path d="M170.5 958.5 V974.5 Q170.5 977.5 173.5 977.5 H203.7 L221.7 958.5" fill="#e9e9e7" stroke="#848284" stroke-width="1"/><rect x="553.0" y="957" width="51.200000000000045" height="2.2" fill="#d6d3ce"/><path d="M552.5 958.5 V974.5 Q552.5 977.5 555.5 977.5 H586.7 L604.7 958.5" fill="#d6d3ce" stroke="#848284" stroke-width="1"/></svg>
<div class="t " style="left:176px;top:962px;">Entry</div>
<div class="t " style="left:220px;top:962px;">Checkpoints</div>
<div class="t " style="left:296px;top:962px;">Violations</div>
<div class="t " style="left:359px;top:962px;">Calendar</div>
<div class="t " style="left:420px;top:962px;">Images</div>
<div class="t " style="left:473px;top:962px;">Recap</div>
<div class="t " style="left:521px;top:962px;">GPS</div>
<div class="t " style="left:558px;top:962px;">EOBR</div>
<div class="t " style="left:603px;top:962px;">Resets</div>
<div class="" style="left:163px;top:980px;width:995px;height:17px;border:1px solid #a09e98;border-radius:1.5px"></div>
<div class="t " style="left:167px;top:983px;">Type: Full-time</div>
<div class="t " style="left:250px;top:983px;">Status: Active</div>
<div class="t " style="left:330px;top:983px;">Terminal:</div>
<div class="" style="left:1160px;top:980px;width:63px;height:17px;border:1px solid #a09e98;border-radius:1.5px"></div>
<div class="t " style="left:1164px;top:983px;">OceanBlue</div>
<div class="" style="left:1225px;top:980px;width:63px;height:17px;border:1px solid #a09e98;border-radius:1.5px"></div>
<div class="t " style="left:1229px;top:983px;">Regular</div>
<div class="" style="left:1290px;top:980px;width:63px;height:17px;border:1px solid #a09e98;border-radius:1.5px"></div>
<div class="t " style="left:1294px;top:983px;">Edit</div>
<div class="" style="left:1355px;top:980px;width:142px;height:17px;border:1px solid #a09e98;border-radius:1.5px"></div>
<div class="t " style="left:1374px;top:983px;">Image Archive Active</div>
<svg style="position:absolute;left:1357px;top:982px" width="14" height="14" viewBox="0 0 14 14"><circle cx="7" cy="7" r="6.3" fill="#2aa82a" stroke="#106010" stroke-width="0.8"/><path d="M3.5 7 L6 10 L10.5 3.5" stroke="#fff" stroke-width="2" fill="none"/></svg>
<svg style="position:absolute;left:1389px;top:958px" width="109" height="27" viewBox="1389 958 109 27">
<defs><pattern id="dz" width="2" height="2" patternUnits="userSpaceOnUse"><rect width="2" height="2" fill="#d6d3ce"/><rect width="1" height="1" fill="#fff"/><rect x="1" y="1" width="1" height="1" fill="#fff"/></pattern>
<radialGradient id="mg" cx="0.4" cy="0.35" r="0.7"><stop offset="0" stop-color="#ffffff"/><stop offset="1" stop-color="#d4d4e8"/></radialGradient></defs>
<rect x="1389" y="959" width="83" height="25" fill="#d6d3ce"/>
<rect x="1471" y="959" width="25" height="24.5" fill="url(#dz)"/>
<rect x="1471" y="959" width="1" height="24.5" fill="#848284"/>
<path d="M1396 964.2 L1399 961.6 M1396 964.2 Q1408 961.4 1415.6 965.6 Q1417.4 967.4 1416.4 970" stroke="#9c9ca4" stroke-width="1" fill="none"/>
<path d="M1409 968.6 Q1415 967.6 1416.6 972 Q1417 976.6 1411 978.4 Z" fill="#e4e4ec" stroke="#505050" stroke-width="1"/>
<ellipse cx="1403.4" cy="974.7" rx="8.6" ry="6.3" fill="url(#mg)" stroke="#000" stroke-width="1.3" transform="rotate(-10 1403.4 974.7)"/>
<path d="M1420.4 971 L1435.5 968.5 L1443.9 974.3 L1422.3 979.6 Z" fill="#12126c"/>
<path d="M1422.3 979.6 L1443.9 974.3 L1443 973.4 L1422.6 978.4 Z" fill="#2828c8"/>
<path d="M1420.4 971 L1422.3 979.6 L1423.2 979 L1421.4 971.2Z" fill="#2020b0"/>
<path d="M1430.6 969.8 L1436.2 962.8" stroke="#8c94b0" stroke-width="1.7" stroke-linecap="round"/>
<path d="M1450.5 963.3 L1462.6 963.3 L1462.6 970.6 L1452 972 Z" fill="#fff" stroke="#8c8cc4" stroke-width="0.7"/>
<path d="M1455.4 976 L1467.4 972.6 L1463.2 979.4 L1456.4 978.2 Z" fill="#fff" stroke="#8c8cc4" stroke-width="0.7"/>
<path d="M1448.4 975.6 L1467.4 972.2" stroke="#202020" stroke-width="2.6" stroke-linecap="round"/>
<path d="M1448.2 976.4 L1454 976.6" stroke="#303030" stroke-width="3" stroke-linecap="round"/>
<path d="M1474.5 965.6 L1483 965 L1485.4 975.6 L1477 976.6 Z" fill="#fff" stroke="#000" stroke-width="1.3"/>
<path d="M1478 969.4 L1486.2 968 L1489 977 L1481.6 978.8 Z" fill="#fff" stroke="#000" stroke-width="1.3"/>
<path d="M1481.8 971.8 L1487.6 968.6 L1495.2 973.6 L1488.8 980.4 Z" fill="#fff" stroke="#000" stroke-width="1.3"/>
</svg>
</body></html>
